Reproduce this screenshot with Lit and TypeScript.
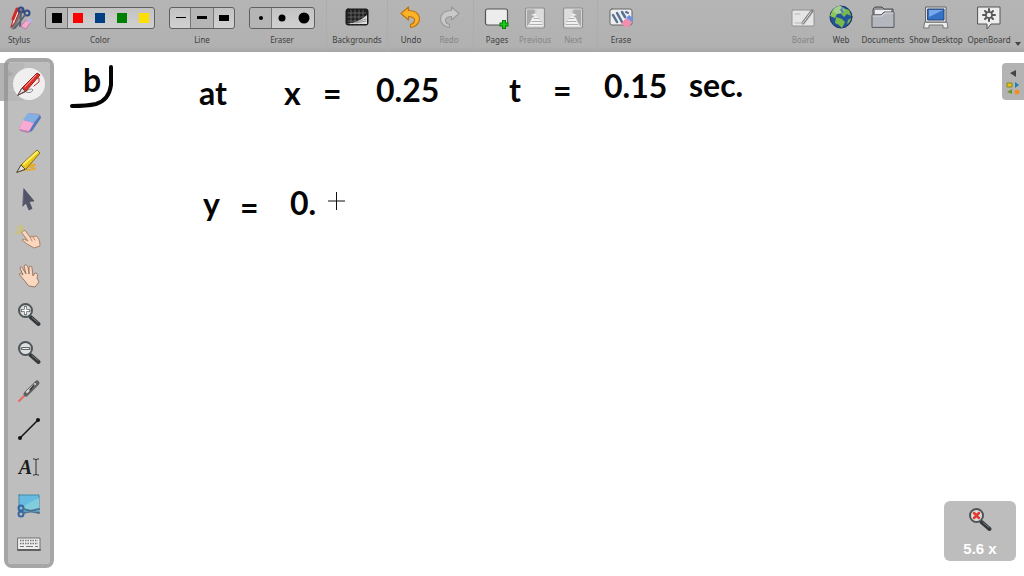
import { LitElement, html, svg, css } from "lit";
import { customElement, state } from "lit/decorators.js";

const icon = (body: unknown, size = 28) =>
  html`<svg width=${size} height=${size} viewBox="0 0 28 28" aria-hidden="true" fill="none" stroke-linecap="round" stroke-linejoin="round">${body}</svg>`;

const arrow = (fill: string, line: string) => svg`<path d="M4 9.500 11.500 3V6.500C19 6.500 24 11 22 17.500Q20 22.500 13.500 23.500V20.500Q18 19 17.500 15.500 16 12.500 11.500 12.500V16Z" fill=${fill} stroke=${line} stroke-width="1.200"/>`;

const page = svg`<rect x="4.500" y="4" width="19" height="20" rx="1.500" fill="#dcdcdc" stroke="#8f8f8f" stroke-width="1.200"/><path d="M6 5.500h7Q18 8 14 12L6 22.500Z" fill="#aaa"/><path d="M13 6q5 3 1 6l3 1 5 9H8l3-8 3-2-4-1 5-2Z" fill="#f1f1f1"/><path d="M13 14.500h5m-7 3h9m-11 3h12" stroke="#b0b0b0"/>`;

const lens = svg`<path d="M15.500 17 23.500 24" stroke="#33373a" stroke-width="4"/><path d="m17 17.500 6 5" stroke="#74797b" stroke-width="1"/><circle cx="10.500" cy="10.500" r="6.500" fill="#dedede" stroke="#4c5558" stroke-width="2"/>`;

const icons = {
  stylus: svg`<path d="M8 24 17 6" stroke="#777" stroke-width="3"/><path d="m6 23 2-7 5-11 2 1-5 12Z" fill="#f5eeee" stroke="#b61f1f"/><path d="m8 15 4-10" stroke="#d42a24" stroke-width="3"/><circle cx="16" cy="6" r="2.500" stroke="#304a83" stroke-width="2"/><circle cx="22" cy="9" r="2.500" stroke="#304a83" stroke-width="2"/><path d="m16 9-1 13m5-11L10 24" stroke="#5d6272" stroke-width="2"/><path d="m16 22 5-6 5 2-5 7Z" fill="#f2a9cc" stroke="#c07aa0"/><path d="m21 16 2-2 4 2-1 3Z" fill="#b4b8e8"/>`,
  backgrounds: svg`<rect x="3" y="5" width="22" height="16" rx="2" fill="#202020" stroke="#171717"/><path d="M5 9h18M5 13h18M5 17h18M8 6v14m4-14v14m4-14v14m4-14v14" stroke="#777" stroke-width=".7"/><path d="M4 20Q17 18 24 11v9Z" fill="#ddd"/><path d="m10 19 13-4m-10 4 10-2" stroke="#777" stroke-width=".7"/>`,
  undo: arrow("#fbb128", "#bd7510"),
  redo: svg`<g transform="matrix(-1 0 0 1 28 0)">${arrow("#c9c9c9", "#9a9a9a")}</g>`,
  pages: svg`<rect x="2.500" y="5" width="22" height="16" rx="2" fill="#ececec" stroke="#555" stroke-width="1.200"/><path d="M21 16v9m-4.500-4.500h9" stroke="#087b08" stroke-width="4" stroke-linecap="butt"/><path d="M21 17v7m-3.500-3.500h7" stroke="#20c81d" stroke-width="2" stroke-linecap="butt"/>`,
  previous: page,
  next: svg`<g transform="matrix(-1 0 0 1 28 0)">${page}</g>`,
  erase: svg`<rect x="3" y="5" width="22" height="16" rx="2" fill="#eee" stroke="#666"/><path d="m6 11 4 7m0-9 5 9m0-10 3 5" stroke="#587094" stroke-width="2.500"/><path d="m19 8 2 1" stroke="#587094" stroke-width="2"/><path d="m14 20 5-6 6 4-4 6Z" fill="#f28dad"/><path d="m19 14 3-3 4 3-1 4Z" fill="#6c91dd"/>`,
  board: svg`<rect x="3" y="6" width="22" height="16" rx="1" fill="#e5e5e5" stroke="#929292"/><path d="m14 19 9-12" stroke="#808080" stroke-width="3"/><path d="m14 19 8-11" stroke="#ddd" stroke-width="1"/><path d="M6 10h5m-5 9h8" stroke="#b5b5b5"/>`,
  web: svg`<circle cx="14" cy="13" r="11" fill="#235398" stroke="#1a345f"/><path d="M5 7q6-7 10-4l-2 3 2 3-5 1-2 4-5-2Z" fill="#8ec55b"/><path d="m15 4 7 2 2 6-4-2-3 3-3-3 3-2Zm-6 9 6 2 3 3-3 6-3-3-4-2Zm12 3 3-2q-1 5-4 6Z" fill="#77b94b"/><ellipse cx="12" cy="6" rx="6" ry="4" fill="#d4edfb" opacity=".3"/>`,
  documents: svg`<path d="M4 22V5l2-2h7l2 2h9v16Z" fill="#92949a" stroke="#4d4f55"/><path d="M6 6h16v4H6Z" fill="#eee"/><path d="M3 23V11h9l3-3h10v15Z" fill="#b5b7be" stroke="#56585d"/><path d="M4 12h9l3-3h8" stroke="#d7d9df"/>`,
  desktop: svg`<path d="M3 18h22l1 6h-5v-3H7v3H2Z" fill="#eee" stroke="#777"/><rect x="4" y="3" width="20" height="15" fill="#eee" stroke="#606060"/><rect x="6" y="5" width="16" height="11" fill="#3672c8" stroke="#233f71"/><path d="M7 6h14L7 13Z" fill="#77a9e9"/>`,
  openboard: svg`<path d="M3 3h22v17h-9l-4 5v-5H3Z" fill="#ededed" stroke="#555"/><path d="M14 5v12M8 11h12M10 7l8 8m0-8-8 8" stroke="#555" stroke-width="2"/><circle cx="14" cy="11" r="3" fill="#eee" stroke="#555" stroke-width="1.500"/>`,
  pen: svg`<path d="M8 23q8-6 10-3-2 4-7 2" stroke="#888"/><path d="m3 25 4-7L22 3l3 2-14 16Z" fill="#e02f2b" stroke="#971e1b"/><path d="m3 25 4-7 3 3Z" fill="#ddd" stroke="#555"/><path d="M10 17 21 5" stroke="#ffb1a5"/><path d="M20 8h4v4l-5 4" stroke="#bc2822"/>`,
  eraser: svg`<path d="m4 20 8-13 3-2 9 1 2 3-9 14-4 2-8-2Z" fill="#b883ae"/><path d="m8 12 11 3-5 8-10-2Z" fill="#f7aad3"/><path d="m8 12 5-7 12 2-6 8Z" fill="#83b0e2"/><path d="m19 15 6-8 1 3-9 13-3 1Z" fill="#5279bb"/>`,
  marker: svg`<path d="M9 23q8-7 11-5l-5 2 5 2-8 1" stroke="#e5ac38" stroke-width="2"/><path d="m2 25 4-7L22 3l3 3-14 16Z" fill="#ecc719" stroke="#827017"/><path d="m2 25 4-7 4 4Z" fill="#ddd" stroke="#544e3b"/><path d="M9 17 22 5" stroke="#fff067" stroke-width="2"/>`,
  select: svg`<path d="m9 4 10 12-5 .5 3 7-3 1.500-3-7-3 3Z" fill="#525569" stroke="#43465a" stroke-width=".7"/>`,
  point: svg`<path d="m2 4 5 5M6 1v5M1 9h5m3-5L5 9m-4 2 5-3" stroke="#c8c471" stroke-width="1.500"/><path d="M8 8q2-2 4 2l3 4 6-1q4 2 4 10l-6 2-7-4-5-4q2-2 6 1L7 10Z" fill="#fbd7bd" stroke="#a98369"/><path d="m15 14 2 4m0-5 3 4" stroke="#b98d73"/>`,
  hand: svg`<path d="m9 18-5-6q1-2 4 1L5 6q1-3 3 1l3 5L9 4q2-3 4 1l1 7 0-7q3-2 3 1l1 8 2-3q4 0 2 5l2 4-4 5-6-1Z" fill="#fbd9c0" stroke="#9c7863"/>`,
  zoomIn: svg`${lens}<path d="M10.500 7v7M7 10.500h7" stroke="#62686a" stroke-width="3"/><path d="M10.500 7.500v6M7.500 10.500h6" stroke="#fff" stroke-width="1.500"/>`,
  zoomOut: svg`${lens}<path d="M7 10.500h7" stroke="#62686a" stroke-width="3"/><path d="M7.500 10.500h6" stroke="#eee"/>`,
  laser: svg`<path d="m4 24 8-8" stroke="#eb6864" stroke-width="2"/><path d="M11 17 22 6" stroke="#606060" stroke-width="5"/><path d="m12 15 8-8" stroke="#ddd" stroke-width="2"/><path d="m15 13 4-5" stroke="#333" stroke-width="1.500"/>`,
  line: svg`<path d="M5 23 23 5" stroke="#111" stroke-width="1.500"/><circle cx="5" cy="23" r="2" fill="#111"/><circle cx="23" cy="5" r="2" fill="#111"/>`,
  capture: svg`<rect x="4" y="3" width="20" height="17" fill="#65bce0" stroke="#3b86a6" stroke-dasharray="2 1"/><path d="m4 17 10-6L24 6v13H4Z" fill="#82cddd"/><circle cx="6" cy="16" r="2.500" stroke="#3965a0" stroke-width="2"/><circle cx="6" cy="22" r="2.500" stroke="#3965a0" stroke-width="2"/><path d="m8 17 16 4m-16 0 16-4" stroke="#4d7290" stroke-width="2"/>`,
  keyboard: svg`<rect x="3" y="8" width="22" height="12" fill="#eee" stroke="#717171"/><path d="M5 10.500h18M5 13.500h18" stroke="#777" stroke-width="1.500" stroke-dasharray="1.500 1" stroke-linecap="butt"/><path d="M5 16.500h4m2 0h7m2 0h3" stroke="#777" stroke-linecap="butt"/><path d="M3 20h22" stroke="#606060" stroke-width="2"/>`,
  reset: svg`${lens}<path d="m8 8 5 5m0-5-5 5" stroke="#e23a31" stroke-width="2.500"/>`,
};

@customElement("app-root")
export class AppRoot extends LitElement {
  @state() private tool = "Pen";

  static styles = css`
    :host { display: flex; flex-direction: column; height: 100vh; background: #fff; font-family: "Noto Sans", "Open Sans", sans-serif; }
    * { box-sizing: border-box; }
    button { appearance: none; border: 0; margin: 0; padding: 0; background: none; color: inherit; font: inherit; }
    svg { display: block; flex: none; }
    .bar { display: flex; justify-content: space-between; height: 52px; flex: none; background: linear-gradient(#b5b5b5, #b1b1b1 90%, #a5a5a5); color: #404040; font-size: 8px; line-height: 12px; }
    .section { display: flex; }
    .set { display: flex; padding: 0 5px 0 4px; border-right: 1px solid #adadad; }
    .pens { padding: 0 11px 0 0; }
    .solo { padding: 0; }
    .item { display: flex; flex-direction: column; align-items: center; gap: 2px; width: 38px; padding-top: 4px; white-space: nowrap; }
    .medium { width: 46px; }
    .wide { width: 60px; }
    .item:disabled { color: #858585; }
    .choice { display: flex; flex-direction: column; align-items: center; gap: 5px; padding-top: 7px; margin-left: 14px; }
    .choice.first { margin-left: 7px; }
    .cells { display: flex; height: 22px; border: 1px solid #606060; border-radius: 3px; overflow: hidden; background: linear-gradient(#c2c2c2, #d1d1d1); }
    .cell { position: relative; display: grid; place-items: center; width: 22px; }
    .cell:first-child, .cell:last-child { width: 21px; }
    .cell input { position: absolute; inset: 0; margin: 0; opacity: 0; }
    .cell:has(input:checked) { background: #b5b5b5; box-shadow: 0 0 0 1px #777; }
    .swatch { width: 10px; height: 10px; }
    .more { width: 12px; display: flex; align-items: end; justify-content: center; padding-bottom: 6px; }
    .canvas { position: relative; flex: 1; min-height: 0; overflow: hidden; }
    .ink { position: absolute; top: 0; left: 0; }
    .writing { font-family: Lato, "Open Sans", sans-serif; font-size: 32px; font-weight: 700; fill: #050505; }
    .tab { position: absolute; display: flex; align-items: center; background: #b3b3b3; }
    .left { top: 11px; left: 0; width: 24px; height: 38px; padding-left: 6px; }
    .right { top: 11px; right: 0; width: 22px; height: 37px; justify-content: center; border-radius: 4px 0 0 4px; }
    .palette { position: absolute; top: 6px; bottom: 8px; left: 4px; width: 50px; display: flex; flex-direction: column; align-items: center; justify-content: space-between; padding: 6px 0 4px; border: 4px solid rgba(150, 150, 150, .85); border-radius: 8px; background: rgba(183, 183, 183, .9); background-clip: padding-box; }
    .tool { display: grid; place-items: center; width: 32px; height: 32px; border-radius: 50%; }
    .tool[aria-pressed="true"] { background: #efefef; }
    .letter { display: flex; align-items: center; gap: 1px; color: #1b1b1b; font: italic 700 20px/24px "Liberation Serif", serif; }
    .zoom { position: absolute; right: 8px; bottom: 15px; display: flex; flex-direction: column; align-items: center; gap: 6px; width: 72px; padding: 4px 0 2px; border-radius: 6px; background: #bdbdbd; color: #fff; font: 700 15px/20px "Liberation Sans", sans-serif; }
  `;

  private item(label: string, art: unknown, size = "", off = false) {
    return html`<button class="item ${size}" ?disabled=${off}>${icon(art)}<span>${label}</span></button>`;
  }

  private choice(name: string, options: [string, unknown][], picked: number, extra = "") {
    return html`<div class="choice ${extra}" role="radiogroup" aria-labelledby=${name}>
      <div class="cells">${options.map(([label, mark], i) => html`<label class="cell"><input type="radio" name=${name} aria-label=${label} ?checked=${i === picked}>${mark}</label>`)}</div>
      <span id=${name}>${name}</span>
    </div>`;
  }

  private mark(body: unknown) {
    return html`<svg class="swatch" viewBox="0 0 10 10" overflow="visible" aria-hidden="true">${body}</svg>`;
  }

  render() {
    const colors: [string, unknown][] = [["Black", "#000"], ["Red", "#f00"], ["Blue", "#003f83"], ["Green", "#008000"], ["Yellow", "#ffdf00"]]
      .map(([n, c]) => [n, this.mark(svg`<rect width="10" height="10" fill=${c}/>`)]);
    const lines: [string, unknown][] = ([["Fine", 1], ["Medium", 3], ["Strong", 6]] as [string, number][])
      .map(([n, h]) => [n, this.mark(svg`<rect y=${Math.floor((10 - h) / 2)} width="10" height=${h}/>`)]);
    const erasers: [string, unknown][] = ([["Small", 2], ["Middle", 3.5], ["Large", 5.5]] as [string, number][])
      .map(([n, r]) => [n, this.mark(svg`<circle cx="5" cy="5" r=${r}/>`)]);
    const text = html`<span class="letter">A<svg width="6" height="18" viewBox="0 0 6 18" aria-hidden="true"><path d="M0 1h2l1 1 1-1h2M3 2v14M0 17h2l1-1 1 1h2" fill="none" stroke="#333"/></svg></span>`;
    const tools: [string, unknown][] = [
      ["Pen", icon(icons.pen)], ["Eraser", icon(icons.eraser)], ["Marker", icon(icons.marker)], ["Select", icon(icons.select)],
      ["Interact", icon(icons.point)], ["Scroll", icon(icons.hand)], ["Zoom in", icon(icons.zoomIn)], ["Zoom out", icon(icons.zoomOut)],
      ["Laser", icon(icons.laser)], ["Line", icon(icons.line)], ["Text", text], ["Capture", icon(icons.capture)], ["Keyboard", icon(icons.keyboard)],
    ];
    const words: [string, number, number][] = [
      ["b", 83, 40], ["at", 199, 53], ["x", 284, 53], ["=", 323, 54], ["0.25", 376, 50], ["t", 509, 50], ["=", 553, 51],
      ["0.15", 604, 46], ["sec.", 689, 45], ["y", 203, 164], ["=", 240, 168], ["0.", 290, 163],
    ];
    return html`
      <header class="bar">
        <div class="section">
          <div class="set pens">
            ${this.item("Stylus", icons.stylus)}
            ${this.choice("Color", colors, 0, "first")}
            ${this.choice("Line", lines, 1)}
            ${this.choice("Eraser", erasers, 0)}
          </div>
          <div class="set solo">${this.item("Backgrounds", icons.backgrounds, "wide")}</div>
          <div class="set">${this.item("Undo", icons.undo)}${this.item("Redo", icons.redo, "", true)}</div>
          <div class="set">${this.item("Pages", icons.pages)}${this.item("Previous", icons.previous, "", true)}${this.item("Next", icons.next, "", true)}</div>
          ${this.item("Erase", icons.erase, "medium")}
        </div>
        <div class="section">
          ${this.item("Board", icons.board, "", true)}
          ${this.item("Web", icons.web)}
          ${this.item("Documents", icons.documents, "medium")}
          ${this.item("Show Desktop", icons.desktop, "wide")}
          ${this.item("OpenBoard", icons.openboard, "medium")}
          <button class="more" aria-label="More"><svg width="6" height="4" aria-hidden="true"><path d="M0 0h6L3 4Z" fill="#444"/></svg></button>
        </div>
      </header>
      <main class="canvas">
        <svg class="ink" width="100%" height="100%">
          <g class="writing">${words.map(([w, x, y]) => svg`<text x=${x} y=${y}>${w}</text>`)}</g>
          <path d="M111 15V33Q109 48 96 52 87 54 72 54" fill="none" stroke="#050505" stroke-width="4" stroke-linecap="round"/>
          <path d="M328 149h17M336.500 140v18" stroke="#111"/>
        </svg>
        <button class="tab left" aria-label="Pages panel"><svg width="12" height="28" aria-hidden="true"><path d="m2 2 6 4-6 3Z" fill="#444"/><path d="M2 14h8v3H2Zm0 6h8v4H2Z" fill="#ddd" stroke="#888"/></svg></button>
        <nav class="palette" aria-label="Tools">
          ${tools.map(([name, art]) => html`<button class="tool" aria-label=${name} aria-pressed=${this.tool === name} @click=${() => (this.tool = name)}>${art}</button>`)}
        </nav>
        <button class="tab right" aria-label="Library"><svg width="14" height="28" aria-hidden="true"><path d="m4 5 6-3v7Z" fill="#444"/><path d="M1 15h5v4H1Z" fill="#e4c31d" stroke="#8c851b"/><path d="m9 14 4 3-4 3Z" fill="#1d84ad"/><path d="m1 24 5-3v5Z" fill="#699623"/><circle cx="11" cy="24" r="2.500" fill="#f28e2a"/></svg></button>
        <button class="zoom">${icon(icons.reset)}<span>5.6 x</span></button>
      </main>`;
  }
}
